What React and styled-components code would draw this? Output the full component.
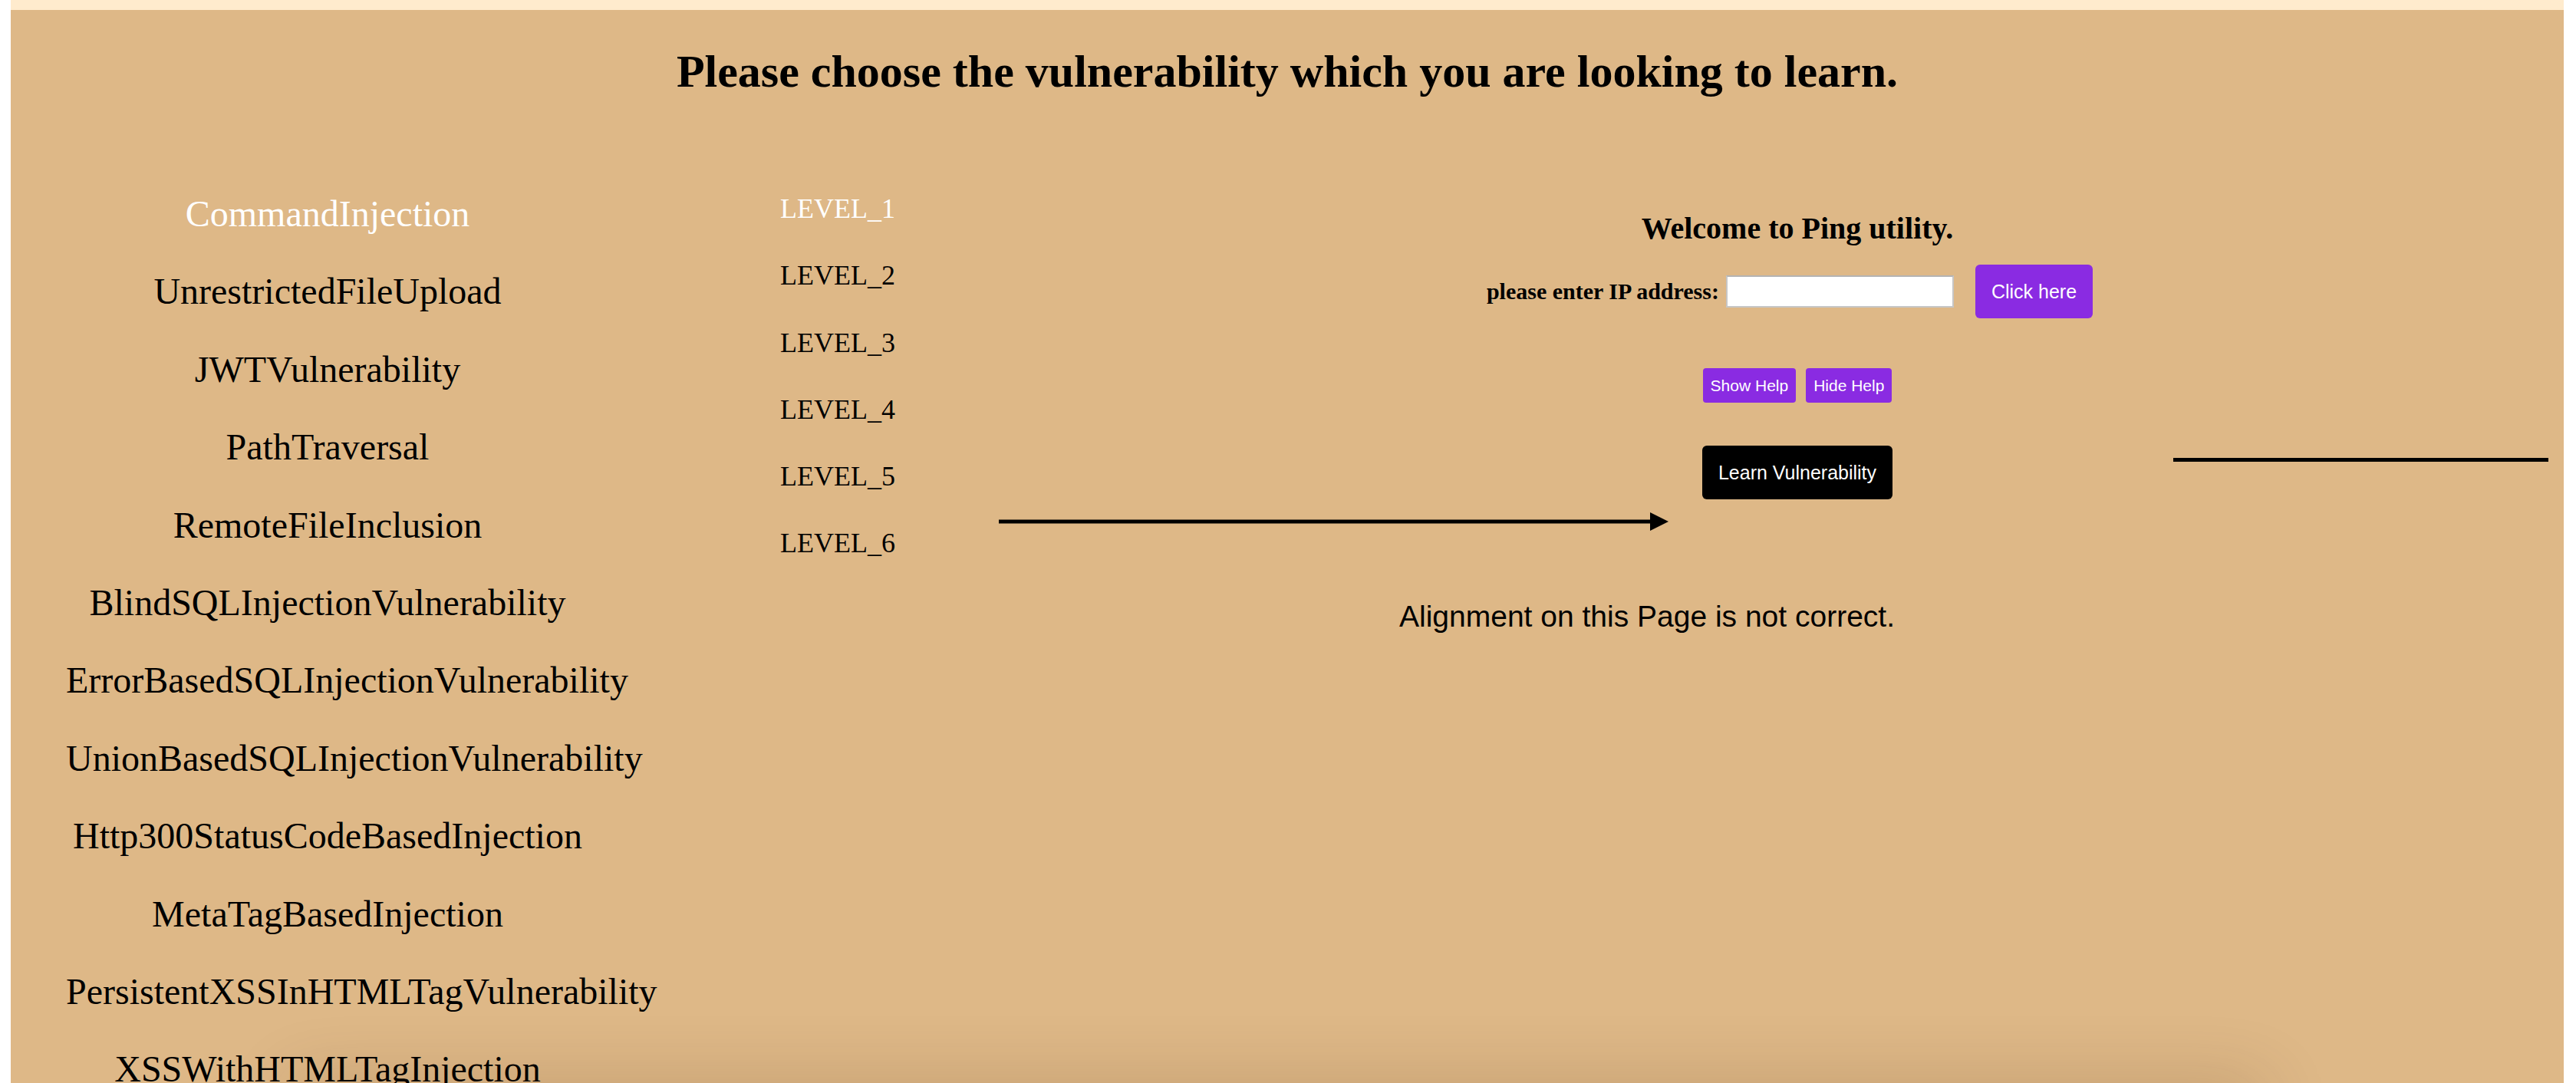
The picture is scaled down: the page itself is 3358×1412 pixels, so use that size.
import React from "react";
import styled, { createGlobalStyle } from "styled-components";

const GlobalStyle = createGlobalStyle`
  html, body {
    margin: 0;
    padding: 0;
    background: #ffffff;
  }
  * {
    box-sizing: border-box;
  }
`;

const vulnerabilities = [
  "CommandInjection",
  "UnrestrictedFileUpload",
  "JWTVulnerability",
  "PathTraversal",
  "RemoteFileInclusion",
  "BlindSQLInjectionVulnerability",
  "ErrorBasedSQLInjectionVulnerability",
  "UnionBasedSQLInjectionVulnerability",
  "Http300StatusCodeBasedInjection",
  "MetaTagBasedInjection",
  "PersistentXSSInHTMLTagVulnerability",
  "XSSWithHTMLTagInjection",
];

const levels = ["LEVEL_1", "LEVEL_2", "LEVEL_3", "LEVEL_4", "LEVEL_5", "LEVEL_6"];

export default function App() {
  return (
    <>
      <GlobalStyle />
      <Page>
        <Heading>Please choose the vulnerability which you are looking to learn.</Heading>

        <Main>
          <VulnList>
            {vulnerabilities.map((name, i) => (
              <VulnItem key={name} $active={i === 0}>
                {name}
              </VulnItem>
            ))}
          </VulnList>

          <LevelList>
            {levels.map((level, i) => (
              <LevelItem key={level} $active={i === 0}>
                {level}
              </LevelItem>
            ))}
          </LevelList>

          <Content>
            <Title>Welcome to Ping utility.</Title>
            <FormRow>
              <Label htmlFor="ip">please enter IP address:</Label>
              <IpInput id="ip" type="text" />
              <PurpleButton $size="large">Click here</PurpleButton>
            </FormRow>

            <HelpRow>
              <PurpleButton>Show Help</PurpleButton>
              <PurpleButton>Hide Help</PurpleButton>
            </HelpRow>

            <LearnButton>Learn Vulnerability</LearnButton>

            <Notice>Alignment on this Page is not correct.</Notice>

            {/* stray drawings from the page */}
            <Arrow width="873" height="24" viewBox="0 0 873 24">
              <rect x="0" y="9.5" width="850" height="5" fill="#000" />
              <polygon points="849,0 873,12 849,24" fill="#000" />
            </Arrow>
            <StrayLine />
          </Content>
        </Main>

        <FooterShadow />
      </Page>
    </>
  );
}

const Page = styled.div`
  position: relative;
  margin: 0 16px 0 14px;
  height: 100vh;
  overflow: hidden;
  background: #deb887;
  border-top: 13px solid #ffebcd;
  color: #000;
  font-family: "Liberation Serif", "Times New Roman", serif;
`;

const Heading = styled.h1`
  margin: 46px 0 0;
  font-size: 60px;
  line-height: 68px;
  font-weight: bold;
  text-align: center;
`;

const Main = styled.div`
  display: grid;
  grid-template-columns: 682px 576px 1fr;
  align-items: start;
  margin-top: 101px;
  padding-left: 72px;
`;

const VulnList = styled.div`
  display: flex;
  flex-direction: column;
`;

const VulnItem = styled.div`
  font-size: 48px;
  line-height: 101.4px;
  height: 101.4px;
  text-align: center;
  white-space: nowrap;
  color: ${(p) => (p.$active ? "#ffffff" : "#000000")};
  cursor: pointer;
`;

const LevelList = styled.div`
  display: flex;
  flex-direction: column;
  padding-left: 249px;
  margin-top: 1px;
`;

const LevelItem = styled.div`
  font-size: 36px;
  line-height: 87.3px;
  height: 87.3px;
  white-space: nowrap;
  color: ${(p) => (p.$active ? "#ffffff" : "#000000")};
  cursor: pointer;
`;

const Content = styled.div`
  position: relative;
  display: flex;
  flex-direction: column;
  align-items: center;
`;

const Title = styled.h3`
  margin: 46px 0 0;
  font-size: 40px;
  line-height: 48px;
  font-weight: bold;
`;

const FormRow = styled.div`
  display: flex;
  align-items: center;
  margin: 23px 20px 0 0;
`;

const Label = styled.label`
  font-size: 30px;
  line-height: 34px;
  font-weight: bold;
`;

const IpInput = styled.input`
  width: 297px;
  height: 42px;
  margin: 0 28px 0 9px;
  padding: 0 6px;
  background: #ffffff;
  border: 2px solid #c6c6c6;
  border-top-color: #b4b4b4;
  font-size: 26px;
  outline: none;
`;

const ButtonBase = styled.button`
  border: none;
  color: #ffffff;
  font-family: "Liberation Sans", Arial, Helvetica, sans-serif;
  cursor: pointer;
  white-space: nowrap;
`;

const PurpleButton = styled(ButtonBase)`
  background: #8a2be2;
  height: ${(p) => (p.$size === "large" ? "70px" : "45px")};
  padding: ${(p) => (p.$size === "large" ? "0 21px" : "0 10px")};
  font-size: ${(p) => (p.$size === "large" ? "25px" : "21px")};
  border-radius: ${(p) => (p.$size === "large" ? "6px" : "4px")};
`;

const HelpRow = styled.div`
  display: flex;
  gap: 13px;
  margin-top: 65px;
`;

const LearnButton = styled(ButtonBase)`
  margin-top: 56px;
  height: 70px;
  padding: 0 21px;
  background: #000000;
  border-radius: 6px;
  font-size: 25px;
`;

const Notice = styled.p`
  margin: 131px 392px 0 0;
  font-family: "Liberation Sans", Arial, Helvetica, sans-serif;
  font-size: 39px;
  line-height: 44px;
`;

const Arrow = styled.svg`
  position: absolute;
  left: -42px;
  top: 440px;
`;

const StrayLine = styled.div`
  position: absolute;
  left: 1489px;
  top: 369px;
  width: 489px;
  height: 5px;
  background: #000;
`;

const FooterShadow = styled.div`
  position: absolute;
  left: 366px;
  right: 390px;
  bottom: -60px;
  height: 60px;
  box-shadow: 0 0 90px 0 rgba(70, 35, 0, 0.2);
`;
